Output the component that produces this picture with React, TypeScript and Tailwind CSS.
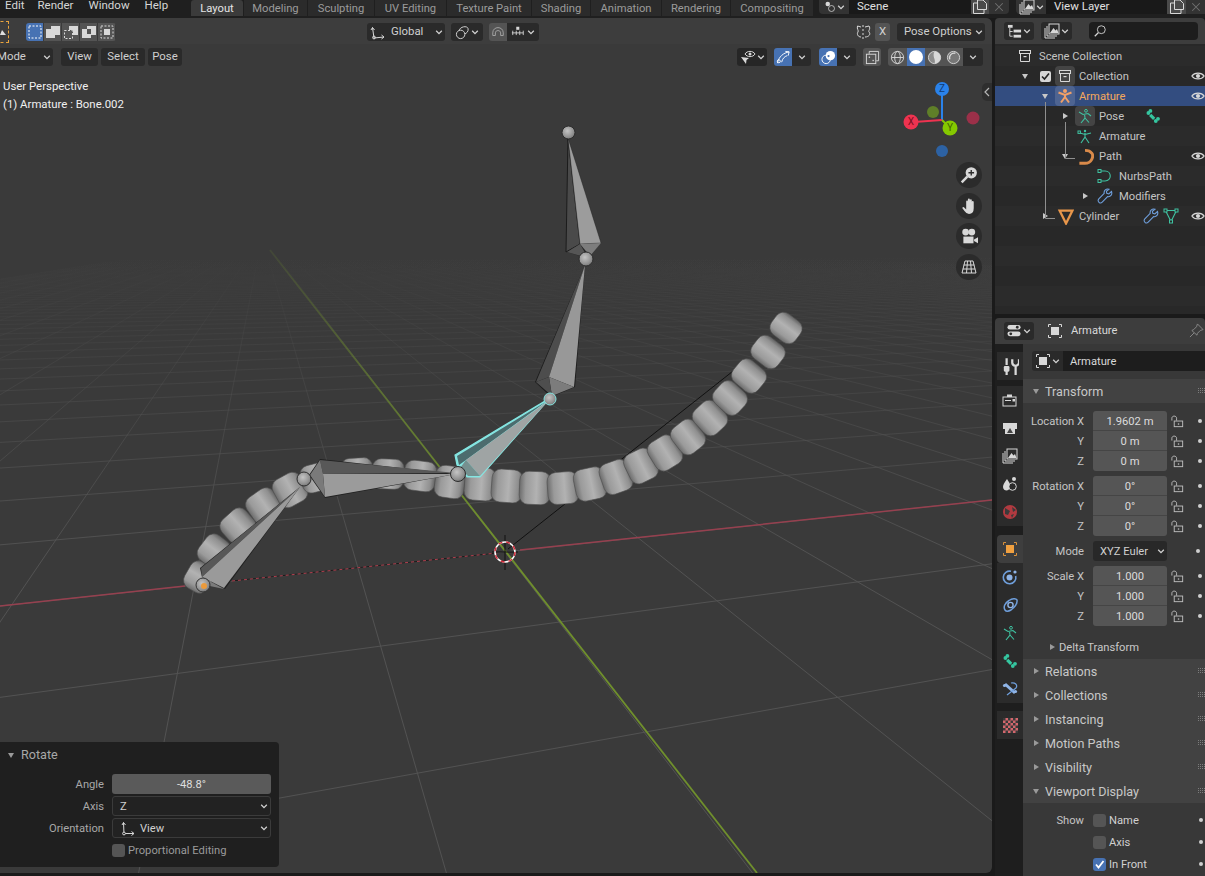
import React from "react";

type P = { x: number; y: number };
const O = { x: 505, y: 552 };
const VX = { x: 3300, y: 253 };
const VY = { x: 262, y: 237 };
const A = 0.05;
const B = 0.182;
const proj = (u: number, v: number): P => {
  const w = 1 + u * A + v * B;
  return {
    x: (O.x + u * A * VX.x + v * B * VY.x) / w,
    y: (O.y + u * A * VX.y + v * B * VY.y) / w,
  };
};
const gridLines: [P, P][] = [];
for (let v = -2; v <= 70; v++) {
  const umin = Math.max(-14, (0.02 - 1 - v * B) / A);
  gridLines.push([proj(umin, v), proj(120, v)]);
}
for (let u = -14; u <= 60; u++) {
  const vmin = (0.02 - 1 - u * A) / B;
  gridLines.push([proj(u, vmin), proj(u, 70)]);
}

const segs: [number, number, number, number][] = [
  [199, 577, 30, 26],
  [214, 551, 31, 28],
  [238, 526, 32, 30],
  [264, 506, 32, 31],
  [290, 490, 31, 31],
  [315, 478, 28, 28],
  [357, 473, 32, 30],
  [388, 474, 32, 30],
  [420, 476, 32, 30],
  [450, 482, 30, 32],
  [480, 484, 31, 33],
  [507, 486, 31, 33],
  [535, 488, 31, 33],
  [563, 488, 31, 32],
  [590, 484, 31, 32],
  [616, 477, 30, 32],
  [641, 466, 30, 32],
  [665, 453, 30, 32],
  [688, 437, 29, 32],
  [710, 418, 29, 32],
  [730, 398, 28, 32],
  [749, 376, 28, 32],
  [768, 352, 27, 32],
  [786, 328, 26, 30],
];
const segAngle = (i: number) => {
  const a = segs[Math.max(0, i - 1)];
  const b = segs[Math.min(segs.length - 1, i + 1)];
  return (Math.atan2(b[1] - a[1], b[0] - a[0]) * 180) / Math.PI;
};

function Ball({ x, y, r = 7, ring = "#2d2d2d" }: { x: number; y: number; r?: number; ring?: string }) {
  return <circle cx={x} cy={y} r={r} fill="url(#ball)" stroke={ring} strokeWidth="1" />;
}

function Scene3D() {
  return (
    <svg className="absolute inset-0 w-[992px] h-[855px]" viewBox="0 18 992 855">
      <defs>
        <linearGradient id="fade" gradientUnits="userSpaceOnUse" x1="0" y1="255" x2="0" y2="560">
          <stop offset="0" stopColor="#505050" stopOpacity="0" />
          <stop offset="0.4" stopColor="#505050" stopOpacity="0.4" />
          <stop offset="1" stopColor="#525252" stopOpacity="1" />
        </linearGradient>
        <linearGradient id="greenfade" gradientUnits="userSpaceOnUse" x1="0" y1="250" x2="0" y2="520">
          <stop offset="0" stopColor="#6f8f2c" stopOpacity="0.15" />
          <stop offset="1" stopColor="#6f8f2c" stopOpacity="1" />
        </linearGradient>
        <linearGradient id="seg" x1="0" y1="0" x2="1" y2="0">
          <stop offset="0" stopColor="#6c6c6c" />
          <stop offset="0.2" stopColor="#9a9a9a" />
          <stop offset="0.55" stopColor="#b2b2b2" />
          <stop offset="0.85" stopColor="#8f8f8f" />
          <stop offset="1" stopColor="#606060" />
        </linearGradient>
        <radialGradient id="ball" cx="0.42" cy="0.38" r="0.7">
          <stop offset="0" stopColor="#c4c4c4" />
          <stop offset="0.7" stopColor="#8e8e8e" />
          <stop offset="1" stopColor="#6a6a6a" />
        </radialGradient>
      </defs>
      {gridLines.map(([a, b], i) => (
        <line key={i} x1={a.x} y1={a.y} x2={b.x} y2={b.y} stroke="url(#fade)" strokeWidth="1" />
      ))}
      <line x1="270" y1="250" x2="757" y2="873" stroke="url(#greenfade)" strokeWidth="1.8" />
      <line x1="0" y1="606" x2="185" y2="586" stroke="#96404f" strokeWidth="1.5" />
      <line x1="520" y1="550" x2="992" y2="500" stroke="#96404f" strokeWidth="1.5" />
      <line x1="508" y1="549" x2="747" y2="360" stroke="#111111" strokeWidth="1" />
      {segs.map(([x, y, w, h], i) => (
        <rect
          key={i}
          x={x - w / 2}
          y={y - h / 2}
          width={w}
          height={h}
          rx="9"
          fill="url(#seg)"
          stroke="#4e4e4e"
          strokeWidth="0.6"
          transform={`rotate(${segAngle(i)} ${x} ${y})`}
        />
      ))}
      <line x1="232" y1="581" x2="497" y2="553" stroke="#1a1a1a" strokeWidth="1" />
      <line x1="232" y1="581" x2="497" y2="553" stroke="#b0404f" strokeWidth="1" strokeDasharray="3 3" />

      {/* top bone */}
      <polygon points="568,138 567,252 586,258 601,243" fill="#242424" />
      <polygon points="568,138 566,252 580,244" fill="#4a4a4a" stroke="#111111" strokeWidth="0.8" />
      <polygon points="568,138 580,244 601,243" fill="#9c9c9c" stroke="#222222" strokeWidth="0.4" />
      <polygon points="580,244 601,243 590,256" fill="#7d7d7d" />
      <polygon points="567,252 580,244 588,258" fill="#565656" />
      <Ball x={568.5} y={132.5} r={6.5} />
      {/* second bone */}
      <polygon points="585,265 535,382 551,397 575,387" fill="#1c1c1c" />
      <polygon points="585,265 536,382 549,377" fill="#4d4d4d" />
      <polygon points="585,265 549,377 574,387" fill="#989898" />
      <polygon points="549,377 574,387 552,396" fill="#7c7c7c" />
      <polygon points="536,382 549,377 552,396" fill="#4e4e4e" />
      <Ball x={586} y={259} r={7} />
      {/* selected bone */}
      <polygon points="550,398 455,455 457,465 467,477 480,477" fill="#85e6e2" stroke="#85e6e2" strokeWidth="1.2" />
      <polygon points="547,401 457,456 459,465 466,460" fill="#4c6c6e" />
      <polygon points="548,401 466,460 480,476" fill="#9fa4a4" />
      <polygon points="466,460 480,476 468,476 460,468" fill="#76908f" />
      <Ball x={550} y={399} r={6} ring="#85e6e2" />
      {/* fourth bone */}
      <polygon points="456,474 320,459 309,475 325,498" fill="#202020" />
      <polygon points="456,473 320,460 323,474" fill="#585858" />
      <polygon points="456,474 323,474 325,497" fill="#9b9b9b" />
      <polygon points="310,475 320,460 323,474 325,497" fill="#7a7a7a" />
      <Ball x={458} y={474} r={7.5} />
      {/* fifth bone */}
      <polygon points="300,487 200,568 202,577 225,589" fill="#202020" />
      <polygon points="300,487 201,568 202,577" fill="#585858" />
      <polygon points="300,487 202,577 224,588" fill="#9a9a9a" />
      <polygon points="202,577 224,589 205,585" fill="#7b7b7b" />
      <Ball x={304} y={479} r={7} />
      <Ball x={203} y={585} r={7} ring="#333333" />
      <circle cx="204" cy="586" r="3" fill="#ea9a3c" />
      {/* 3D cursor */}
      <line x1="505" y1="535" x2="505" y2="570" stroke="#111111" strokeWidth="1" />
      <line x1="492" y1="552" x2="518" y2="552" stroke="#111111" strokeWidth="1" />
      <circle cx="505" cy="552" r="10" fill="none" stroke="#ffffff" strokeWidth="1.5" />
      <circle cx="505" cy="552" r="10" fill="none" stroke="#d22d3c" strokeWidth="1.5" strokeDasharray="4 4" />
      {/* navigation gizmo */}
      <circle cx="933" cy="112" r="6" fill="#5f7f28" />
      <circle cx="973" cy="118" r="6.5" fill="#9b3049" />
      <circle cx="942" cy="151" r="6" fill="#2d62a3" />
      <line x1="942" y1="120" x2="942" y2="92" stroke="#2a82ea" strokeWidth="2" />
      <line x1="942" y1="120" x2="914" y2="122" stroke="#ee3350" strokeWidth="2" />
      <line x1="942" y1="120" x2="950" y2="128" stroke="#85c800" strokeWidth="2" />
      <circle cx="942" cy="89" r="7" fill="#2a82ea" />
      <circle cx="911" cy="122" r="7.5" fill="#ee3350" />
      <circle cx="950" cy="128" r="7.5" fill="#85c800" />
    </svg>
  );
}

const UI = "font-['Roboto','Noto_Sans',sans-serif] whitespace-nowrap";

function Chev({ c = "#d0d0d0", s = 8 }: { c?: string; s?: number }) {
  return (
    <svg width={s} height={s} viewBox="0 0 8 8" className="shrink-0">
      <path d="M1.2 2.8 L4 5.6 L6.8 2.8" fill="none" stroke={c} strokeWidth="1.3" />
    </svg>
  );
}
function TriDown({ c = "#9a9a9a" }: { c?: string }) {
  return (
    <svg width="8" height="8" viewBox="0 0 8 8" className="shrink-0">
      <path d="M1 2 L7 2 L4 7 Z" fill={c} />
    </svg>
  );
}
function TriRight({ c = "#9a9a9a" }: { c?: string }) {
  return (
    <svg width="8" height="8" viewBox="0 0 8 8" className="shrink-0">
      <path d="M2 1 L7 4 L2 7 Z" fill={c} />
    </svg>
  );
}
function Ico({ children, s = 16, v = 16 }: { children: React.ReactNode; s?: number; v?: number }) {
  return (
    <svg width={s} height={s} viewBox={`0 0 ${v} ${v}`} fill="none" className="shrink-0">
      {children}
    </svg>
  );
}
const W = "#d8d8d8";

function Eye() {
  return (
    <Ico s={14}>
      <path d="M1 8 C4 3.5 12 3.5 15 8 C12 12.5 4 12.5 1 8 Z" stroke={W} strokeWidth="1.4" />
      <circle cx="8" cy="8" r="2.4" fill={W} />
    </Ico>
  );
}
function Lock() {
  return (
    <Ico s={15}>
      <path d="M2 7 V4.5 C2 1.5 7 1.5 7 4.5 V7" stroke="#bdbdbd" strokeWidth="1" />
      <rect x="4.5" y="7.5" width="9" height="6" stroke="#bdbdbd" strokeWidth="1" />
      <rect x="8.4" y="10" width="1.4" height="1.4" fill="#bdbdbd" />
    </Ico>
  );
}
function Dot() {
  return <span className="block w-[4px] h-[4px] rounded-full bg-[#cfcfcf]" />;
}
function Grip() {
  return (
    <svg width="8" height="6" viewBox="0 0 8 6" className="shrink-0">
      {[0, 2, 4, 6].map((x) =>
        [0, 2, 4].map((y) => <rect key={`${x}${y}`} x={x} y={y} width="1" height="1" fill="#7c7c7c" />)
      )}
    </svg>
  );
}
function BoxIcon({ c = W }: { c?: string }) {
  return (
    <Ico s={16}>
      <rect x="2.5" y="2.5" width="11" height="3" stroke={c} />
      <path d="M3.5 5.5 V13.5 H12.5 V5.5" stroke={c} />
      <rect x="6.5" y="8" width="3" height="1.2" fill={c} />
    </Ico>
  );
}
function Runner({ c = "#3fc2a1" }: { c?: string }) {
  return (
    <Ico s={16}>
      <circle cx="9" cy="2.8" r="1.4" stroke={c} />
      <path d="M2 4 L6 6.5 L11 5.5 L14 8 M7.5 6 L8 10 L4 15 M8 10 L12 14.5" stroke={c} strokeWidth="1.1" />
    </Ico>
  );
}
function ArmData() {
  return (
    <Ico s={16}>
      <rect x="1" y="3" width="2.4" height="2.4" stroke="#3fc2a1" />
      <circle cx="8" cy="3" r="1.2" fill="#3fc2a1" />
      <path d="M3 5 L8 6.5 L14 5 M8 5 V9 L4 15 M8 9 L12 15" stroke="#3fc2a1" strokeWidth="1.1" />
    </Ico>
  );
}
function BoneI({ c = "#35c6a0", s = 16 }: { c?: string; s?: number }) {
  return (
    <Ico s={s}>
      <path d="M5.2 6.8 L9.2 10.8" stroke={c} strokeWidth="3.2" />
      <circle cx="3.4" cy="5" r="1.9" fill={c} />
      <circle cx="5.4" cy="2.9" r="1.9" fill={c} />
      <circle cx="10.8" cy="13" r="1.9" fill={c} />
      <circle cx="13" cy="10.8" r="1.9" fill={c} />
    </Ico>
  );
}
function Wrench({ c = "#6f9fdc" }: { c?: string }) {
  return (
    <Ico s={16}>
      <path
        d="M14.5 3.5 L11.8 6 L9.8 5.4 L9.4 3.3 L12 1.2 C9.2 .2 6.6 2.4 7.2 5.4 L1.8 10.8 C.8 12 1 13.5 2 14.3 C3 15.2 4.4 15 5.2 14.2 L10.6 8.6 C13.4 9.2 15.6 6.6 14.5 3.5 Z"
        stroke={c}
        strokeWidth="1.1"
      />
    </Ico>
  );
}
function MeshData() {
  return (
    <Ico s={16}>
      <path d="M2.5 2.5 H13.5 L8 13.5 Z" stroke="#3fc2a1" strokeWidth="1.1" />
      <rect x="1" y="1" width="3" height="3" fill="#282828" stroke="#3fc2a1" />
      <rect x="12" y="1" width="3" height="3" fill="#282828" stroke="#3fc2a1" />
      <rect x="6.5" y="12" width="3" height="3" fill="#282828" stroke="#3fc2a1" />
    </Ico>
  );
}
function ObjSquare({ fill = W, c = W }: { fill?: string; c?: string }) {
  return (
    <Ico s={16}>
      <rect x="4" y="4" width="8" height="8" fill={fill} />
      <path d="M1.5 4 V1.5 H4 M12 1.5 H14.5 V4 M14.5 12 V14.5 H12 M4 14.5 H1.5 V12" stroke={c} />
    </Ico>
  );
}
function ImgStack() {
  return (
    <Ico s={16}>
      <rect x="5" y="1" width="10" height="10" stroke={W} />
      <path d="M6 10 L9.5 5 L11.5 7.5 L13 6 L14.5 10 Z" fill={W} />
      <path d="M3 3 V13 H13 M1 5 V15 H11" stroke={W} />
    </Ico>
  );
}
function NewIcon() {
  return (
    <Ico s={16}>
      <path d="M5 4 H1.5 V14.5 H12 V11" stroke={W} />
      <path d="M5.5 1 H11 L14.5 4.5 V10.5 H5.5 Z" stroke={W} />
    </Ico>
  );
}
function XIcon() {
  return (
    <Ico s={12}>
      <path d="M3 3 L13 13 M13 3 L3 13" stroke="#707070" strokeWidth="1.4" />
    </Ico>
  );
}

function Topbar() {
  const tabs: [string, string][] = [
    ["Modeling", "w-[63px]"],
    ["Sculpting", "w-[66px]"],
    ["UV Editing", "w-[71px]"],
    ["Texture Paint", "w-[84px]"],
    ["Shading", "w-[58px]"],
    ["Animation", "w-[70px]"],
    ["Rendering", "w-[68px]"],
    ["Compositing", "w-[82px]"],
  ];
  return (
    <div className="h-[18px] flex items-start bg-[#1f1f1f] text-[11.2px] leading-[16px] overflow-hidden shrink-0">
      <div className="h-[11px] leading-[11px] flex items-start text-[#d6d6d6] w-[191px] shrink-0 text-[11.5px]">
        <span className="ml-[5px]">Edit</span>
        <span className="ml-[13px]">Render</span>
        <span className="ml-[15px]">Window</span>
        <span className="ml-[15px]">Help</span>
      </div>
      <div className="h-[16px] w-[52px] shrink-0 bg-[#3b3b3b] text-[#e4e4e4] rounded-t-[3px] flex items-center justify-center pt-[2px]">Layout</div>
      <div className="flex items-start shrink-0">
        {tabs.map(([t, w]) => (
          <div key={t} className={`h-[16px] ${w} shrink-0 ml-[1px] bg-[#2b2b2b] text-[#9b9b9b] flex items-center justify-center pt-[2px]`}>
            {t}
          </div>
        ))}
      </div>
      <div className="ml-[6px] flex items-start h-[14px] shrink-0">
        <div className="h-[14px] w-[30px] bg-[#333333] rounded-bl-[4px] flex items-center justify-center gap-[1px]">
          <Ico s={12}>
            <circle cx="5" cy="4" r="3" fill={W} />
            <circle cx="10" cy="10" r="4" stroke={W} />
          </Ico>
          <Chev />
        </div>
        <div className="h-[14px] w-[122px] bg-[#191919] text-[#e0e0e0] pl-[8px] flex items-center text-[11.5px] pb-[2px]">Scene</div>
        <div className="h-[14px] w-[18px] bg-[#4a4a4a] flex items-center justify-center">
          <NewIcon />
        </div>
        <div className="w-[20px] h-[14px] bg-[#333333] rounded-br-[4px] flex items-center justify-center">
          <XIcon />
        </div>
      </div>
      <div className="ml-[7px] flex items-start h-[14px] shrink-0">
        <div className="h-[14px] w-[30px] bg-[#333333] rounded-bl-[4px] flex items-center justify-center gap-[1px]">
          <ImgStack />
          <Chev />
        </div>
        <div className="h-[14px] w-[121px] bg-[#191919] text-[#e0e0e0] pl-[8px] flex items-center text-[11.5px] pb-[2px]">View Layer</div>
        <div className="h-[14px] w-[19px] bg-[#4a4a4a] flex items-center justify-center">
          <NewIcon />
        </div>
        <div className="w-[20px] h-[14px] bg-[#333333] flex items-center justify-center">
          <XIcon />
        </div>
      </div>
    </div>
  );
}

function SelMode({ kind, active }: { kind: number; active?: boolean }) {
  return (
    <div className={`w-[18px] h-[18px] flex items-center justify-center ${active ? "bg-[#4772b3]" : "bg-[#545454]"} border-r border-[#3a3a3a]`}>
      <svg width="14" height="14" viewBox="0 0 14 14">
        {kind === 0 && <rect x="1" y="1" width="12" height="12" fill="none" stroke="#fff" strokeDasharray="2 1.5" />}
        {kind === 1 && (
          <>
            <rect x="0" y="4" width="9" height="9" fill="#d8d8d8" />
            <rect x="5" y="1" width="9" height="9" fill="#d8d8d8" />
          </>
        )}
        {kind === 2 && (
          <>
            <rect x="0.5" y="5.5" width="8" height="8" fill="none" stroke="#d8d8d8" strokeDasharray="2 1.5" />
            <path d="M5 1 H14 V10 H9 V5 H5 Z" fill="#d8d8d8" />
          </>
        )}
        {kind === 3 && (
          <>
            <path d="M0 4 H5 V9 H9 V13 H0 Z" fill="#d8d8d8" />
            <path d="M5 1 H14 V10 H9 V4 H5 Z" fill="#d8d8d8" />
          </>
        )}
        {kind === 4 && (
          <>
            <rect x="1" y="1" width="12" height="12" fill="none" stroke="#d8d8d8" strokeDasharray="2 1.5" />
            <rect x="4" y="4" width="6" height="6" fill="#d8d8d8" />
          </>
        )}
      </svg>
    </div>
  );
}

const DARK = "bg-[#2a2a2a] rounded-[3px] h-[18px] flex items-center text-[#cfcfcf]";

function ViewportHeader() {
  return (
    <div className="relative z-10 text-[11.4px] leading-none">
      <div className="h-[26px] bg-[#3d3d3d] flex items-center rounded-tr-[6px] pt-[2px]">
        <div className="w-[14px] h-[22px] -ml-[5px] border border-dashed border-[#e8a33d] flex items-center justify-end pr-[1px]">
          <svg width="8" height="8" viewBox="0 0 8 8">
            <path d="M1 7 L7 7 L3 2 Z" fill="#e0e0e0" />
          </svg>
        </div>
        <div className="ml-[17px] flex rounded-[3px] overflow-hidden">
          <SelMode kind={0} active />
          <SelMode kind={1} />
          <SelMode kind={2} />
          <SelMode kind={3} />
          <SelMode kind={4} />
        </div>
        <div className={`ml-[251px] w-[78px] ${DARK}`}>
          <span className="ml-[3px]">
            <Ico s={16}>
              <path d="M4 14 L2.5 3.5 M2.5 3.5 L1 6 M2.5 3.5 L4.5 6 M4 14 L14 13 M14 13 L11.5 11 M14 13 L11.5 15" stroke={W} />
              <circle cx="4" cy="13.5" r="1.4" stroke={W} />
            </Ico>
          </span>
          <span className="ml-[5px]">Global</span>
          <span className="ml-auto mr-[2px]">
            <Chev />
          </span>
        </div>
        <div className={`ml-[6px] w-[32px] ${DARK} justify-center gap-[1px]`}>
          <Ico s={15}>
            <circle cx="6" cy="10" r="4.5" stroke={W} />
            <path d="M4.5 5.8 C5 2 13 0 14 4 C14.5 7 12 9 10.5 9.5" stroke={W} />
          </Ico>
          <Chev />
        </div>
        <div className="ml-[6px] w-[18px] h-[18px] bg-[#545454] rounded-l-[3px] flex items-center justify-center">
          <Ico s={14}>
            <path d="M2 9 C2 1 14 1 14 9 V12 H11 V9 C11 5.5 5 5.5 5 9 V12 H2 Z" stroke="#aaaaaa" />
          </Ico>
        </div>
        <div className="w-[32px] h-[18px] bg-[#2a2a2a] rounded-r-[3px] flex items-center justify-center gap-[2px]">
          <Ico s={14}>
            <rect x="6" y="2" width="3.5" height="3.5" fill={W} />
            <path d="M1 9 H14 M2 6.5 V11.5 M6 6.5 V11.5 M10 6.5 V11.5 M14 6.5 V11.5" stroke={W} />
          </Ico>
          <Chev />
        </div>
        <div className="ml-[317px]">
          <Ico s={16}>
            <path d="M7 1 V15" stroke={W} strokeDasharray="2 2" />
            <path d="M5 3 L1.5 2 C.5 5 3 6.5 2 8 C.5 10 2 13 5 13 M9 3 L13 2 C15 5 12 6.5 13 8 C15 10 13 13 9 13" stroke={W} />
          </Ico>
        </div>
        <div className="ml-[3px] w-[15px] h-[18px] bg-[#545454] rounded-[3px] text-[#d0d0d0] flex items-center justify-center">X</div>
        <div className={`ml-[7px] w-[88px] ${DARK} pl-[7px]`}>
          <span>Pose Options</span>
          <span className="ml-auto mr-[2px]">
            <Chev />
          </span>
        </div>
      </div>
      <div className="h-[26px] flex items-center">
        <div className={`w-[53px] ${DARK} rounded-l-none`}>
          <span className="-ml-[3px]">Mode</span>
          <span className="ml-auto mr-[2px]">
            <Chev />
          </span>
        </div>
        <div className={`ml-[8px] w-[37px] ${DARK} justify-center`}>View</div>
        <div className={`ml-[3px] w-[44px] ${DARK} justify-center`}>Select</div>
        <div className={`ml-[3px] w-[34px] ${DARK} justify-center`}>Pose</div>
        <div className={`ml-[555px] w-[30px] ${DARK} justify-center gap-[1px] bg-[#262626]`}>
          <Ico s={16}>
            <path d="M5 5 C7 1.5 13 1.5 15 5 C13 8.5 7 8.5 5 5 Z" stroke={W} />
            <circle cx="10" cy="5" r="1.5" fill={W} />
            <path d="M1 8 L9 9 L6.5 11 L6 15 Z" fill={W} />
          </Ico>
          <Chev />
        </div>
        <div className="ml-[7px] w-[18px] h-[18px] bg-[#4772b3] rounded-l-[3px] flex items-center justify-center">
          <Ico s={15}>
            <path d="M1.5 14 C3 7 8 3 14 2 M14 2 L10 1.5 M14 2 L13 6" stroke="#fff" />
            <circle cx="3" cy="12" r="1.6" stroke="#fff" />
            <path d="M6 13 C7 9 9 7 12 6" stroke="#fff" />
          </Ico>
        </div>
        <div className="w-[19px] h-[18px] bg-[#2a2a2a] rounded-r-[3px] flex items-center justify-center">
          <Chev />
        </div>
        <div className="ml-[8px] w-[18px] h-[18px] bg-[#4772b3] rounded-l-[3px] flex items-center justify-center">
          <Ico s={15}>
            <circle cx="5.5" cy="10" r="4.5" stroke="#fff" />
            <circle cx="10" cy="6" r="5" fill="#fff" />
            <circle cx="8" cy="6.5" r="1.2" fill="#4772b3" />
          </Ico>
        </div>
        <div className="w-[19px] h-[18px] bg-[#2a2a2a] rounded-r-[3px] flex items-center justify-center">
          <Chev />
        </div>
        <div className="ml-[7px] w-[18px] h-[18px] bg-[#545454] rounded-[3px] flex items-center justify-center">
          <Ico s={15}>
            <rect x="1.5" y="4.5" width="10" height="10" stroke={W} />
            <path d="M4.5 4 V1.5 H14.5 V11.5 H12" stroke={W} />
            <rect x="4" y="7" width="1.4" height="1.4" fill={W} />
            <rect x="8" y="10.5" width="1.4" height="1.4" fill={W} />
          </Ico>
        </div>
        <div className="ml-[7px] flex rounded-[3px] overflow-hidden">
          <div className="w-[19px] h-[18px] bg-[#545454] flex items-center justify-center">
            <Ico s={15}>
              <circle cx="8" cy="8" r="6.5" stroke={W} />
              <ellipse cx="8" cy="8" rx="3" ry="6.5" stroke={W} />
              <path d="M1.5 8 H14.5" stroke={W} />
            </Ico>
          </div>
          <div className="w-[18px] h-[18px] bg-[#4772b3] flex items-center justify-center">
            <span className="block w-[14px] h-[14px] rounded-full bg-white" />
          </div>
          <div className="w-[19px] h-[18px] bg-[#545454] flex items-center justify-center">
            <Ico s={15}>
              <circle cx="8" cy="8" r="6.5" fill="#8c8c8c" stroke={W} />
              <path d="M8 1.5 A6.5 6.5 0 0 1 8 14.5 C10 10 5 7 8 1.5 Z" fill="#d8d8d8" />
            </Ico>
          </div>
          <div className="w-[19px] h-[18px] bg-[#545454] flex items-center justify-center">
            <Ico s={15}>
              <circle cx="8" cy="8" r="6.5" fill="#777777" stroke={W} />
              <path d="M4 10 A5 5 0 0 1 10 3.5" stroke={W} strokeWidth="1.5" />
            </Ico>
          </div>
          <div className="w-[20px] h-[18px] bg-[#2a2a2a] flex items-center justify-center">
            <Chev />
          </div>
        </div>
      </div>
    </div>
  );
}

function NavBtn({ children }: { children: React.ReactNode }) {
  return <div className="w-[26px] h-[26px] rounded-full bg-[#2b2b2b] flex items-center justify-center">{children}</div>;
}

function RotateRow({ label, children }: { label: string; children: React.ReactNode }) {
  return (
    <div className="h-[20px] flex items-center mb-[2px]">
      <div className="w-[104px] text-right text-[#a8a8a8] pt-[2px]">{label}</div>
      <div className="ml-[8px] w-[159px]">{children}</div>
    </div>
  );
}

function RotatePanel() {
  const sel = "h-[20px] bg-[#222222] border border-[#3b3b3b] rounded-[3px] flex items-center text-[#d0d0d0] pl-[7px] pr-[2px]";
  return (
    <div className="absolute left-0 bottom-[6px] w-[279px] h-[125px] bg-[#1f1f1f] rounded-r-[4px] text-[11.2px] leading-none">
      <div className="h-[24px] flex items-center pl-[7px] pt-[2px] text-[#a8a8a8] text-[12.6px]">
        <TriDown />
        <span className="ml-[6px]">Rotate</span>
      </div>
      <div className="mt-[8px]">
        <RotateRow label="Angle">
          <div className="h-[20px] bg-[#5a5a5a] rounded-[3px] flex items-center justify-center text-[#dedede] pt-[2px]">-48.8°</div>
        </RotateRow>
        <RotateRow label="Axis">
          <div className={sel}>
            <span className="pt-[2px]">Z</span>
            <span className="ml-auto">
              <Chev />
            </span>
          </div>
        </RotateRow>
        <RotateRow label="Orientation">
          <div className={`${sel} pl-[4px]`}>
            <Ico s={16}>
              <path d="M4 14 L3.5 2.5 M3.5 2.5 L2 5 M3.5 2.5 L5.5 5 M4 13.5 H14 M14 13.5 L11.5 11.5 M14 13.5 L11.5 15.5" stroke={W} />
              <circle cx="4" cy="13.5" r="1.4" stroke={W} fill="#222222" />
            </Ico>
            <span className="ml-[4px] pt-[2px]">View</span>
            <span className="ml-auto">
              <Chev />
            </span>
          </div>
        </RotateRow>
        <div className="h-[20px] flex items-center pl-[112px] text-[#9a9a9a]">
          <span className="block w-[13px] h-[13px] rounded-[3px] bg-[#555555] mr-[3px]" />
          <span className="pt-[2px]">Proportional Editing</span>
        </div>
      </div>
    </div>
  );
}

function Viewport() {
  return (
    <div className={`relative w-[992px] h-[855px] bg-[#3a3a3a] overflow-hidden rounded-r-[6px] shrink-0`}>
      <Scene3D />
      <ViewportHeader />
      <div className="absolute left-[3px] top-[59px] text-[#f0f0f0] text-[11.4px] leading-[18px]">
        <div>User Perspective</div>
        <div>(1) Armature : Bone.002</div>
      </div>
      <div className="absolute left-[937px] top-[64px] w-[10px] text-center text-[10px] leading-[14px] text-[#123a70]">Z</div>
      <div className="absolute left-[906px] top-[97px] w-[10px] text-center text-[10px] leading-[14px] text-[#7a1022]">X</div>
      <div className="absolute left-[945px] top-[103px] w-[10px] text-center text-[10px] leading-[14px] text-[#3f6200]">Y</div>
      <div className="absolute right-0 top-[65px] w-[10px] h-[18px] bg-[#2e2e2e] rounded-l-[5px] flex items-center justify-center">
        <svg width="6" height="10" viewBox="0 0 6 10">
          <path d="M5 1 L1 5 L5 9" fill="none" stroke="#b5b5b5" strokeWidth="1.2" />
        </svg>
      </div>
      <div className="absolute left-[956px] top-[144px] flex flex-col gap-[4.5px]">
        <NavBtn>
          <Ico s={18}>
            <circle cx="10" cy="6" r="5" fill={W} />
            <path d="M10 3.5 V8.5 M7.5 6 H12.5" stroke="#2b2b2b" strokeWidth="1.2" />
            <path d="M6.5 9.5 L1.5 14.5" stroke={W} strokeWidth="2.2" />
          </Ico>
        </NavBtn>
        <NavBtn>
          <Ico s={18}>
            <path
              d="M3.5 9 L5.5 11 V4 Q5.5 3 6.3 3 Q7 3 7 4 V2.4 Q7 1.4 7.9 1.4 Q8.8 1.4 8.8 2.4 V3 Q8.8 2 9.7 2 Q10.5 2 10.5 3 V4.5 Q10.5 3.5 11.3 3.5 Q12.2 3.5 12.2 4.5 V10 Q12.2 15 8 15 Q5.5 15 4 12.5 L2 9.8 Q2.6 8.4 3.5 9 Z"
              fill={W}
            />
          </Ico>
        </NavBtn>
        <NavBtn>
          <Ico s={18}>
            <circle cx="5" cy="4.5" r="3" fill={W} />
            <circle cx="10.5" cy="4.5" r="3" fill={W} />
            <rect x="3" y="8.5" width="9" height="6" fill={W} />
            <path d="M12.5 11 L16 9 V14.5 L12.5 12.5 Z" fill={W} />
          </Ico>
        </NavBtn>
        <NavBtn>
          <Ico s={16}>
            <path d="M4 2 H12 L15 14 H1 Z M2.7 6 H13.3 M1.8 10 H14.2 M6.5 2 L5.5 14 M9.5 2 L10.5 14" stroke={W} />
          </Ico>
        </NavBtn>
      </div>
      <RotatePanel />
    </div>
  );
}

type Tree = {
  pl: string;
  icon: React.ReactNode;
  label: string;
  labelClass?: string;
  arrow?: "d" | "r";
  check?: boolean;
  eye?: boolean;
  sel?: boolean;
  w?: string;
  extra?: React.ReactNode;
};

function IconPad({ children }: { children: React.ReactNode }) {
  return <span className="w-[20px] h-[20px] bg-[#ffffff22] rounded-[4px] flex items-center justify-center">{children}</span>;
}

function Outliner() {
  const rows: Tree[] = [
    { pl: "pl-[20px]", icon: <BoxIcon />, label: "Scene Collection" },
    {
      pl: "pl-[20px]",
      arrow: "d",
      check: true,
      icon: (
        <IconPad>
          <BoxIcon />
        </IconPad>
      ),
      label: "Collection",
      eye: true,
    },
    {
      pl: "pl-[40px]",
      arrow: "d",
      sel: true,
      icon: (
        <IconPad>
          <Ico s={16}>
            <circle cx="8" cy="3" r="2" fill="#f0a068" />
            <path d="M1.5 4.5 L8 7 L14.5 4.5 M8 6 V9.5 M8 9 L4 14.5 M8 9 L12 14.5" stroke="#f0a068" strokeWidth="2" />
          </Ico>
        </IconPad>
      ),
      label: "Armature",
      labelClass: "text-[#f5a85c]",
      eye: true,
    },
    {
      pl: "pl-[60px]",
      arrow: "r",
      icon: (
        <IconPad>
          <Runner />
        </IconPad>
      ),
      label: "Pose",
      w: "w-[46px]",
      extra: <BoneI />,
    },
    { pl: "pl-[80px]", icon: <ArmData />, label: "Armature" },
    {
      pl: "pl-[60px]",
      arrow: "d",
      icon: (
        <Ico s={18}>
          <path d="M3 14.5 H8 C14 14.5 16 8 14 5.5 C13 4 11 3 8 3" stroke="#d98a4a" strokeWidth="2.6" />
        </Ico>
      ),
      label: "Path",
      eye: true,
    },
    {
      pl: "pl-[100px]",
      icon: (
        <Ico s={16}>
          <rect x="1" y="1.5" width="3" height="3" stroke="#3fc2a1" />
          <rect x="1" y="11.5" width="3" height="3" stroke="#3fc2a1" />
          <path d="M4 3 H8 C15 3 15 13 8 13 H4" stroke="#3fc2a1" strokeWidth="1.1" />
        </Ico>
      ),
      label: "NurbsPath",
    },
    { pl: "pl-[80px]", arrow: "r", icon: <Wrench />, label: "Modifiers" },
    {
      pl: "pl-[40px]",
      arrow: "r",
      icon: (
        <Ico s={17}>
          <path d="M2.5 2.5 H14.5 L8.5 14.5 Z" stroke="#e8964a" strokeWidth="2.2" />
        </Ico>
      ),
      label: "Cylinder",
      w: "w-[64px]",
      extra: (
        <>
          <Wrench />
          <span className="w-[4px]" />
          <MeshData />
        </>
      ),
      eye: true,
    },
  ];
  return (
    <div className="h-[296px] shrink-0 flex flex-col overflow-hidden">
      <div className="h-[26px] bg-[#3d3d3d] flex items-center shrink-0 rounded-t-[4px]">
        <div className={`ml-[9px] w-[30px] ${DARK} justify-center gap-[1px]`}>
          <Ico s={15}>
            <rect x="1" y="1" width="5" height="3" fill={W} />
            <path d="M3 4 V13 H6 M3 8 H6" stroke={W} />
            <rect x="7" y="6" width="8" height="3" fill={W} />
            <rect x="7" y="11.5" width="8" height="3" fill={W} />
          </Ico>
          <Chev />
        </div>
        <div className={`ml-[7px] w-[31px] ${DARK} justify-center gap-[1px]`}>
          <ImgStack />
          <Chev />
        </div>
        <div className="ml-[17px] w-[109px] h-[18px] bg-[#1d1d1d] rounded-[4px] flex items-center pl-[4px]">
          <Ico s={14}>
            <circle cx="9.5" cy="6.5" r="4.5" stroke={W} />
            <path d="M6 10 L2 14" stroke={W} strokeWidth="1.4" />
          </Ico>
        </div>
      </div>
      <div className="relative text-[11.2px] leading-none flex-1 bg-[#282828] pt-[2px] text-[#c4c4c4]">
        {rows.map((r, i) => (
          <div
            key={i}
            className={`h-[20px] flex items-center ${r.pl} ${r.sel ? "bg-[#334d80]" : i % 2 === 0 ? "bg-[#2b2b2b]" : "bg-[#282828]"}`}
          >
            {r.arrow && (
              <span className="w-[20px] flex justify-center">{r.arrow === "d" ? <TriDown c="#c8c8c8" /> : <TriRight c="#c8c8c8" />}</span>
            )}
            {r.check && (
              <span className="w-[20px] flex justify-center">
                <span className="w-[11px] h-[11px] rounded-[2px] bg-[#d6d6d6] flex items-center justify-center">
                  <svg width="9" height="9" viewBox="0 0 9 9">
                    <path d="M1 4.5 L3.5 7 L8 1.5" fill="none" stroke="#222222" strokeWidth="1.6" />
                  </svg>
                </span>
              </span>
            )}
            <span className="w-[20px] h-[20px] flex items-center justify-center">{r.icon}</span>
            <span className={`ml-[4px] pt-[2px] ${r.w ?? ""} ${r.labelClass ?? ""}`}>{r.label}</span>
            {r.extra}
            {r.eye && (
              <span className="ml-auto">
                <Eye />
              </span>
            )}
          </div>
        ))}
        {[0, 1, 2, 3, 4].map((i) => (
          <div key={i} className={`h-[20px] ${i % 2 === 0 ? "bg-[#282828]" : "bg-[#2b2b2b]"}`} />
        ))}
        <svg className="absolute left-0 top-[2px] w-[210px] h-[200px] pointer-events-none" viewBox="0 0 210 200">
          <path d="M50.5 56 V172.5 H60 M70.5 76 V112.5 H80" stroke="#8f8f8f" fill="none" />
        </svg>
      </div>
    </div>
  );
}

function PropRow({ label, children, last }: { label: string; children?: React.ReactNode; last?: boolean }) {
  return (
    <div className="h-[20px] flex items-center">
      <span className="w-[61px] text-right text-[#c4c4c4] whitespace-nowrap pt-[2px]">{label}</span>
      <div className="ml-[9px] w-[74px]">{children}</div>
      {last !== false && (
        <>
          <span className="ml-[3px]">
            <Lock />
          </span>
          <span className="ml-[13px]">
            <Dot />
          </span>
        </>
      )}
    </div>
  );
}
function Field({ v, pos }: { v: string; pos: "t" | "m" | "b" }) {
  const r = pos === "t" ? "rounded-t-[3px] border-b border-[#454545]" : pos === "b" ? "rounded-b-[3px]" : "border-b border-[#454545]";
  return <div className={`h-[20px] bg-[#555555] text-[#dcdcdc] flex items-center justify-center pt-[2px] ${r}`}>{v}</div>;
}
function Triple({ first, vals }: { first: string; vals: string[] }) {
  return (
    <div>
      <PropRow label={first}>
        <Field v={vals[0]} pos="t" />
      </PropRow>
      <PropRow label="Y">
        <Field v={vals[1]} pos="m" />
      </PropRow>
      <PropRow label="Z">
        <Field v={vals[2]} pos="b" />
      </PropRow>
    </div>
  );
}
function PanelHead({ label, open }: { label: string; open?: boolean }) {
  return (
    <div className="h-[24px] bg-[#424242] flex items-center pl-[9px] text-[12.6px] text-[#c8c8c8]">
      {open ? <TriDown /> : <TriRight />}
      <span className="ml-[5px] pt-[2px]">{label}</span>
      <span className="ml-auto mr-[-1px]">
        <Grip />
      </span>
    </div>
  );
}
function CheckRow({ label, show, checked }: { label: string; show?: string; checked?: boolean }) {
  return (
    <div className="h-[22px] flex items-center">
      <span className="w-[61px] text-right text-[#c4c4c4] pt-[2px]">{show}</span>
      <span className={`ml-[9px] w-[13px] h-[13px] rounded-[3px] flex items-center justify-center ${checked ? "bg-[#4772b3]" : "bg-[#555555]"}`}>
        {checked && (
          <svg width="11" height="11" viewBox="0 0 11 11">
            <path d="M2 5.5 L4.5 8.5 L9.5 2" fill="none" stroke="#ffffff" strokeWidth="1.8" />
          </svg>
        )}
      </span>
      <span className="ml-[3px] w-[90px] text-[#d0d0d0] pt-[2px]">{label}</span>
      <Dot />
    </div>
  );
}

function TabBtn({ children, active }: { children: React.ReactNode; active?: boolean }) {
  return (
    <div className={`h-[28px] w-[26px] ml-[2px] flex items-center justify-center ${active ? "bg-[#3e3e3e] rounded-l-[4px]" : "bg-[#2b2b2b]"}`}>
      {children}
    </div>
  );
}

function PropTabs() {
  return (
    <div className="w-[28px] shrink-0 bg-[#1e1e1e] pt-[8px]">
      <TabBtn>
        <Ico s={18}>
          <path d="M5 1 V7 M5 11 V16" stroke={W} strokeWidth="2" />
          <rect x="2.5" y="8" width="5" height="5" rx="1" fill={W} />
          <path d="M10 2 V5 C10 7 13 8 13 8 V16 M16 2 V5 C16 7 13 8 13 8" stroke={W} strokeWidth="2" />
        </Ico>
      </TabBtn>
      <div className="mt-[6px]">
        <TabBtn>
          <Ico s={16}>
            <rect x="1" y="5" width="13" height="9" stroke={W} />
            <rect x="5" y="2.5" width="5" height="2.5" fill={W} />
            <rect x="10.5" y="7" width="2.5" height="2.5" fill={W} />
            <rect x="3" y="8" width="6" height="1" fill={W} />
          </Ico>
        </TabBtn>
        <TabBtn>
          <Ico s={16}>
            <rect x="1" y="3" width="14" height="3" fill={W} />
            <path d="M1 6 H15 V9 H13 V14 H3 V9 H1 Z" fill={W} />
            <path d="M5 13 L8 8 L11 13 Z" fill="#444444" />
          </Ico>
        </TabBtn>
        <TabBtn>
          <ImgStack />
        </TabBtn>
        <TabBtn>
          <Ico s={16}>
            <circle cx="10.5" cy="10.5" r="3.8" stroke={W} />
            <path d="M5 3 C2 7 1 9 1 11 C1 13.5 3 14.5 4.5 14.5 C6 14.5 7 13.5 7 13 L7.5 7 Z" fill={W} />
            <circle cx="12" cy="3" r="2" fill={W} />
          </Ico>
        </TabBtn>
        <TabBtn>
          <Ico s={16}>
            <circle cx="8" cy="8" r="7" fill="#b13a40" />
            <path d="M3 4 L8 7 L6 11 L3 10 Z M10 3 L14 6 L11 8 Z M9 11 L12 10 L10 14 Z" fill="#3a3a3a" />
          </Ico>
        </TabBtn>
      </div>
      <div className="mt-[9px]">
        <TabBtn active>
          <ObjSquare fill="#f0a040" c="#d8903a" />
        </TabBtn>
        <TabBtn>
          <Ico s={16}>
            <path d="M9 2.3 A6.3 6.3 0 1 0 13.7 7" stroke="#6f9fdc" strokeWidth="1.6" />
            <circle cx="7.5" cy="8.5" r="3" fill="#8fb4e6" />
            <circle cx="13" cy="3" r="1.6" fill="#8fb4e6" />
          </Ico>
        </TabBtn>
        <TabBtn>
          <Ico s={16}>
            <path d="M3 13 C1 10 3 6 7 3.5 C10 1.5 14 1 15 3 C15.5 6 13 10 9 13 C6.5 14.5 4 14.5 3 13 Z" stroke="#6f9fdc" strokeWidth="1.5" />
            <circle cx="8.5" cy="8" r="2.6" stroke="#8fb4e6" strokeWidth="1.4" />
          </Ico>
        </TabBtn>
        <TabBtn>
          <Runner />
        </TabBtn>
        <TabBtn>
          <BoneI />
        </TabBtn>
        <TabBtn>
          <Ico s={16}>
            <path d="M3 3 L13 12" stroke="#8fb4e6" strokeWidth="3" />
            <circle cx="2.5" cy="4.5" r="1.6" fill="#8fb4e6" />
            <circle cx="13.5" cy="10.5" r="1.6" fill="#8fb4e6" />
            <path d="M9 2 C13 1 16 4 14 7 L5 14" stroke="#6f9fdc" strokeWidth="1.2" />
          </Ico>
        </TabBtn>
      </div>
      <div className="mt-[8px]">
        <TabBtn>
          <svg width="15" height="15" viewBox="0 0 15 15">
            <rect width="15" height="15" fill="#d3676d" />
            {[0, 5, 10].flatMap((x) =>
              [0, 5, 10].map((y) => <rect key={`${x}-${y}`} x={x} y={y} width="2.5" height="2.5" fill="#3a3a3a" />)
            )}
            {[2.5, 7.5, 12.5].flatMap((x) =>
              [2.5, 7.5, 12.5].map((y) => <rect key={`${x}-${y}`} x={x} y={y} width="2.5" height="2.5" fill="#3a3a3a" />)
            )}
          </svg>
        </TabBtn>
      </div>
    </div>
  );
}

function Properties() {
  return (
    <div className="mt-[4px] flex-1 flex flex-col overflow-hidden text-[11.2px] leading-none">
      <div className="h-[26px] bg-[#3d3d3d] flex items-center shrink-0 rounded-t-[4px] pb-[1px]">
        <div className={`ml-[9px] w-[30px] ${DARK} justify-center gap-[1px]`}>
          <Ico s={15}>
            <rect x="0.5" y="2" width="14" height="5" rx="2.5" fill={W} />
            <circle cx="11" cy="4.5" r="1.5" fill="#2a2a2a" />
            <rect x="0.5" y="9" width="14" height="5" rx="2.5" fill={W} />
            <circle cx="4" cy="11.5" r="1.5" fill="#2a2a2a" />
          </Ico>
          <Chev />
        </div>
        <span className="ml-[13px]">
          <ObjSquare />
        </span>
        <span className="ml-[8px] text-[#d8d8d8]">Armature</span>
        <span className="ml-auto mr-[1px]">
          <Ico s={15}>
            <path d="M9 1 L15 7 L12 8 L9 11 L8.5 13 L3 8 L5 7 L8 4 Z M5.5 10.5 L1 15" stroke="#8a8a8a" />
          </Ico>
        </span>
      </div>
      <div className="flex flex-1 overflow-hidden">
        <PropTabs />
        <div className="flex-1 bg-[#383838] overflow-hidden">
          <div className="h-[35px] flex items-center pl-[9px] pb-[1px]">
            <div className="w-[31px] h-[20px] bg-[#2a2a2a] rounded-l-[3px] flex items-center justify-center gap-[1px]">
              <ObjSquare />
              <Chev />
            </div>
            <div className="flex-1 h-[20px] bg-[#1d1d1d] text-[#d8d8d8] pl-[7px] pt-[2px] flex items-center">Armature</div>
          </div>
          <PanelHead label="Transform" open />
          <div className="pt-[8px] flex flex-col gap-[5px]">
            <Triple first="Location X" vals={["1.9602 m", "0 m", "0 m"]} />
            <Triple first="Rotation X" vals={["0°", "0°", "0°"]} />
            <div className="h-[20px] flex items-center">
              <span className="w-[61px] text-right text-[#c4c4c4] pt-[2px]">Mode</span>
              <div className="ml-[9px] w-[74px] h-[20px] bg-[#282828] rounded-[3px] text-[#d0d0d0] flex items-center pl-[7px]">
                <span className="pt-[2px]">XYZ Euler</span>
                <span className="ml-auto mr-[2px]">
                  <Chev />
                </span>
              </div>
              <span className="ml-[29px]">
                <Dot />
              </span>
            </div>
            <Triple first="Scale X" vals={["1.000", "1.000", "1.000"]} />
          </div>
          <div className="mt-[11px] mb-[2px] h-[20px] flex items-center pl-[25px] text-[#c8c8c8]">
            <TriRight />
            <span className="ml-[3px] pt-[2px]">Delta Transform</span>
          </div>
          <PanelHead label="Relations" />
          <PanelHead label="Collections" />
          <PanelHead label="Instancing" />
          <PanelHead label="Motion Paths" />
          <PanelHead label="Visibility" />
          <PanelHead label="Viewport Display" open />
          <div className="pt-[6px]">
            <CheckRow show="Show" label="Name" />
            <CheckRow label="Axis" />
            <CheckRow label="In Front" checked />
          </div>
        </div>
      </div>
    </div>
  );
}

export default function App() {
  return (
    <div className={`w-[1205px] h-[876px] bg-[#1a1a1a] overflow-hidden flex flex-col ${UI}`}>
      <Topbar />
      <div className="flex flex-1 overflow-hidden">
        <Viewport />
        <div className="ml-[3px] w-[210px] shrink-0 flex flex-col">
          <Outliner />
          <Properties />
        </div>
      </div>
    </div>
  );
}
